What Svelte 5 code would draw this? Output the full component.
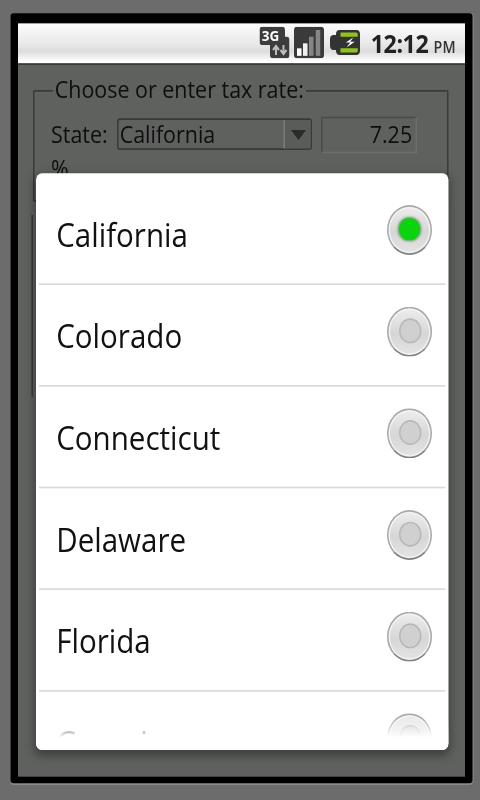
<script>
  const states = [
    { name: 'California', checked: true },
    { name: 'Colorado' },
    { name: 'Connecticut' },
    { name: 'Delaware' },
    { name: 'Florida' },
    { name: 'Georgia' }
  ];
</script>

<div class="page">
<div class="stage">
  <div class="device">
    <div class="screen">
      <header class="status">
        <svg class="ic-data" viewBox="0 0 20 19" aria-hidden="true">
          <path d="M2 0h13a2 2 0 0 1 2 2v4h1a2 2 0 0 1 2 2v9a2 2 0 0 1-2 2H9a2 2 0 0 1-2-2v-6H2a2 2 0 0 1-2-2V2a2 2 0 0 1 2-2z" fill="#3c3c3c"/>
          <text x="1.500" y="8.800" class="g3">3G</text>
          <path d="M11 17v-5M9 14l2-2.400 2 2.400M16 11v5M14 14l2 2.400 2-2.400" stroke="#bdbdbd" stroke-width="1.300" fill="none"/>
        </svg>
        <svg class="ic-signal" viewBox="0 0 20 19" aria-hidden="true">
          <rect width="20" height="19" rx="2" fill="#3a3a3a"/>
          <rect x="2" y="13" width="3" height="4.500" fill="#fff"/>
          <rect x="6" y="10" width="3" height="7.500" fill="#f0f0f0"/>
          <rect x="10" y="6" width="3" height="11.500" fill="#858585"/>
          <rect x="14.500" y="2" width="3" height="15.500" fill="#858585"/>
        </svg>
        <svg class="ic-battery" viewBox="0 0 20 15" aria-hidden="true">
          <path d="M4 3V2.500A2.500 2.500 0 0 1 6.500 0h11A2.500 2.500 0 0 1 20 2.500v10a2.500 2.500 0 0 1-2.500 2.500h-11A2.500 2.500 0 0 1 4 12.500V12H2.500A2.500 2.500 0 0 1 0 9.500v-4A2.500 2.500 0 0 1 2.500 3z" fill="#333"/>
          <path d="M7 1.500h10.500a1 1 0 0 1 1 1v1.500H7zM7 11h11.500v1.500a1 1 0 0 1-1 1H7z" fill="#8fc31f"/>
          <path d="M15.500 4.500l-5 3h3l-2.500 3 5.500-3.500h-3z" fill="#fff"/>
        </svg>
        <span class="time">12:12<small>PM</small></span>
      </header>

      <main class="content">
        <fieldset class="rate">
          <legend>Choose or enter tax rate:</legend>
          <div class="rate-row">
            <span>State:</span>
            <div class="spinner">
              <span class="spinner-value">California</span>
              <span class="spinner-arrow"><i></i></span>
            </div>
            <div class="input">7.25</div>
          </div>
          <div class="pct">%</div>
        </fieldset>
        <div class="second"></div>
      </main>

      <section class="dialog">
        <ul class="list">
          {#each states as s}
            <li class="row">
              <span class="label">{s.name}</span>
              <span class="radio" class:on={s.checked}><i></i></span>
            </li>
          {/each}
        </ul>
        <div class="fade"></div>
      </section>
    </div>
  </div>
</div>
</div>

<style>
  :global(body) {
    margin: 0;
    background: #6c6c6c;
  }
  .page {
    width: 480px;
    height: 800px;
    overflow: hidden;
    filter: blur(0.45px);
  }
  .stage {
    width: 320px;
    height: 480px;
    transform: scale(1.5, 1.6667);
    transform-origin: 0 0;
    font-family: "Open Sans", "Noto Sans", sans-serif;
    box-sizing: border-box;
    padding: 8px 5.500px 0 6.500px;
  }
  .device {
    height: 462px;
    box-sizing: border-box;
    background: #000;
    padding: 6px 4.500px 4px 5.500px;
    border-radius: 2px;
    box-shadow: 0 1px 0 #8a8a8a, 1px 0 0 #7c7c7c;
  }
  .screen {
    position: relative;
    height: 100%;
    display: flex;
    flex-direction: column;
    overflow: hidden;
    background: #5f615f;
  }
  .status {
    height: 23.500px;
    flex: none;
    box-sizing: border-box;
    display: flex;
    align-items: center;
    justify-content: flex-end;
    padding-right: 6px;
    background: linear-gradient(#fdfdfd 0, #e9e9e9 50%, #dcdcdc 70%, #ffffff 95%);
  }
  .ic-data, .ic-signal { width: 20px; height: 19px; }
  .ic-signal { margin-left: 3px; }
  .ic-battery { width: 20px; height: 15px; margin-left: 4px; }
  .g3 { font: 700 9px "Open Sans", sans-serif; fill: #fff; }
  .time {
    margin-left: 7px;
    font: 700 15.500px "Open Sans", sans-serif;
    letter-spacing: -0.300px;
    color: #222;
    white-space: nowrap;
  }
  .time small {
    margin-left: 3.500px;
    font-size: 9.500px;
    font-weight: 600;
    letter-spacing: 0.200px;
    color: #333;
  }
  .content {
    flex: 1;
    position: relative;
    border-top: 1.200px solid #3b3b3b;
    box-sizing: border-box;
    padding: 7.500px 11px 0 9.500px;
    color: #0e0e0e;
    font-size: 14.300px;
  }
  .rate {
    margin: 0;
    padding: 0 0 0 11.500px;
    height: 75px;
    box-sizing: border-box;
    border: 1px solid #3a3b3a;
    border-radius: 1px;
  }
  .rate legend {
    padding: 0 1.500px;
    margin-left: 1px;
    line-height: 16px;
    white-space: nowrap;
  }
  .rate-row {
    display: flex;
    align-items: center;
    gap: 6px;
    margin-top: 8px;
  }
  .spinner {
    width: 130.500px;
    height: 19px;
    box-sizing: border-box;
    display: flex;
    border: 1px solid #383938;
    border-radius: 2px;
  }
  .spinner-value {
    flex: 1;
    padding-left: 1px;
    line-height: 17px;
    border-right: 1px solid #7a7b7a;
  }
  .spinner-arrow {
    width: 17px;
    display: flex;
    align-items: center;
    justify-content: center;
    background: #5a5c5a;
  }
  .spinner-arrow i {
    width: 0;
    height: 0;
    border: 5.500px solid transparent;
    border-top: 6.500px solid #2a2b2a;
    border-bottom: 0;
  }
  .input {
    width: 64px;
    height: 21.500px;
    box-sizing: border-box;
    padding-right: 2.500px;
    text-align: right;
    line-height: 19px;
    border: 1px solid #4a4b4a;
    border-right-color: #6c6d6c;
    border-bottom-color: #6c6d6c;
  }
  .pct {
    line-height: 16px;
    margin-top: 1px;
  }
  .second {
    margin: 7.500px 0 0 -0.500px;
    height: 109px;
    border-left: 1px solid #3a3b3a;
  }
  .dialog {
    position: absolute;
    left: 12px;
    right: 11.500px;
    top: 89.500px;
    height: 346.500px;
    box-sizing: border-box;
    padding: 6px 1.500px 6px;
    background: #fff;
    border-radius: 4px;
    box-shadow: 0 2px 6px 1px rgba(0, 0, 0, 0.35);
    overflow: hidden;
  }
  .list {
    list-style: none;
    margin: 0;
    padding: 0;
    height: 100%;
    overflow: hidden;
  }
  .row {
    height: 61px;
    box-sizing: border-box;
    display: flex;
    align-items: center;
    justify-content: space-between;
    padding: 0 9px 0 12px;
    border-bottom: 1px solid #d9d9d9;
  }
  .label {
    font-size: 19.700px;
    color: #111;
    margin-top: 2.500px;
  }
  .radio {
    width: 30px;
    height: 30px;
    margin-bottom: 4px;
    box-sizing: border-box;
    border-radius: 50%;
    display: flex;
    align-items: center;
    justify-content: center;
    border: 1px solid #a8a8a8;
    border-bottom-color: #808080;
    background: linear-gradient(#ededed, #d6d6d6 55%, #e4e4e4);
    box-shadow: inset 0 0 0 1px #f2f2f2;
  }
  .radio i {
    width: 13px;
    height: 13px;
    border-radius: 50%;
    background: #d0d0d0;
    box-shadow: 0 0 0 1px #b8b8b8;
  }
  .radio.on i {
    width: 13.500px;
    height: 13.500px;
    background: #0bd40f;
    box-shadow: 0 0 1.500px 0.800px #5f9f5f;
  }
  .fade {
    position: absolute;
    left: 0;
    right: 0;
    bottom: 0;
    height: 20px;
    background: linear-gradient(rgba(255, 255, 255, 0), #fff 62%);
  }
</style>
